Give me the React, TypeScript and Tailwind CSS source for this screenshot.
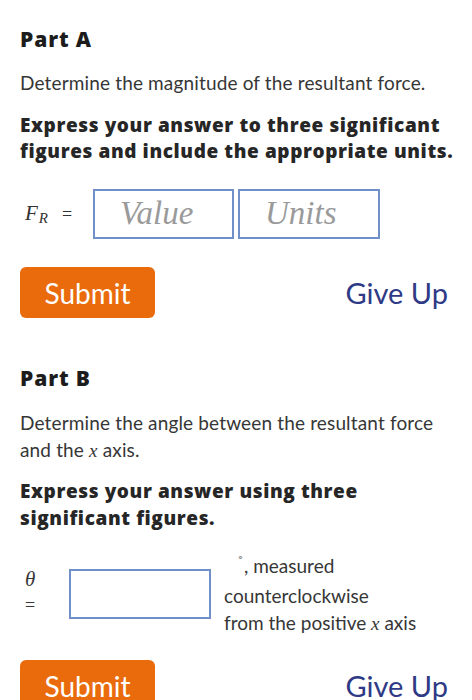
import React from "react";

const sans = "font-['Lato','Open_Sans',sans-serif]";
const bold = "font-['Open_Sans','Lato',sans-serif] font-extrabold";
const serif = "font-['Liberation_Serif','DejaVu_Serif',serif]";

function Actions() {
  return (
    <div className="flex items-center justify-between pr-[24px]">
      <button className="h-[51px] w-[135px] rounded-[6px] bg-[#ea6b0c] text-[28px] text-white">
        Submit
      </button>
      <a className="text-[29px] text-[#2f3a86]">Give Up</a>
    </div>
  );
}

function Heading({ children }: { children: React.ReactNode }) {
  return (
    <h2 className={`${bold} text-[21px] leading-[26px] tracking-[0.9px] text-[#1c1c1c]`}>
      {children}
    </h2>
  );
}

export default function App() {
  return (
    <div className={`${sans} min-h-[700px] bg-white pl-[20px] pt-[26px] text-[#363636]`}>
      {/* Part A */}
      <Heading>Part A</Heading>
      <p className="mt-[17px] text-[19px] leading-[27px] tracking-[0.15px]">
        Determine the magnitude of the resultant force.
      </p>
      <p className={`${bold} mt-[16px] whitespace-nowrap text-[19px] leading-[26px] tracking-[0.6px] text-[#262626]`}>
        Express your answer to three significant
        <br />
        figures and include the appropriate units.
      </p>
      <div className="mt-[25px] flex h-[50px] items-center">
        <div className={`${serif} flex w-[73px] items-center pl-[5px] text-[21px] text-[#333]`}>
          <span className="italic">F</span>
          <span className="mt-[8px] pl-[1px] text-[15px] italic">R</span>
          <span className="ml-[14px] text-[18px]">=</span>
        </div>
        <div className="flex gap-[4px]">
          <div className={`${serif} flex h-[50px] w-[141px] items-center border-2 border-[#7190c9] pl-[25px] text-[33px] italic text-[#9a9a9a]`}>
            Value
          </div>
          <div className={`${serif} flex h-[50px] w-[142px] items-center border-2 border-[#7190c9] pl-[25px] text-[33px] italic text-[#9a9a9a]`}>
            Units
          </div>
        </div>
      </div>
      <div className="mt-[28px]">
        <Actions />
      </div>

      {/* Part B */}
      <div className="mt-[47px]">
        <Heading>Part B</Heading>
      </div>
      <p className="mt-[18px] text-[19px] leading-[27px] tracking-[0.15px]">
        Determine the angle between the resultant force
        <br />
        and the <span className={`${serif} italic`}>x</span> axis.
      </p>
      <p className={`${bold} mt-[14px] whitespace-nowrap text-[19px] leading-[27px] tracking-[0.6px] text-[#262626]`}>
        Express your answer using three
        <br />
        significant figures.
      </p>
      <div className="mt-[20px] flex items-start">
        <div className={`${serif} mt-[14px] flex w-[49px] flex-col pl-[5px] text-[21px] leading-[26px]`}>
          <span className="italic">θ</span>
          <span className="text-[18px]">=</span>
        </div>
        <div className="mt-[17px] h-[50px] w-[142px] border-2 border-[#7190c9]" />
        <div className="ml-[13px] text-[19px] leading-[27px]">
          <div>
            <span className="relative -top-[12px] pl-[13px] text-[11px] text-[#888]">∘</span>, measured
          </div>
          <div>counterclockwise</div>
          <div>
            from the positive <span className={`${serif} italic`}>x</span> axis
          </div>
        </div>
      </div>
      <div className="mt-[23px]">
        <Actions />
      </div>
    </div>
  );
}
